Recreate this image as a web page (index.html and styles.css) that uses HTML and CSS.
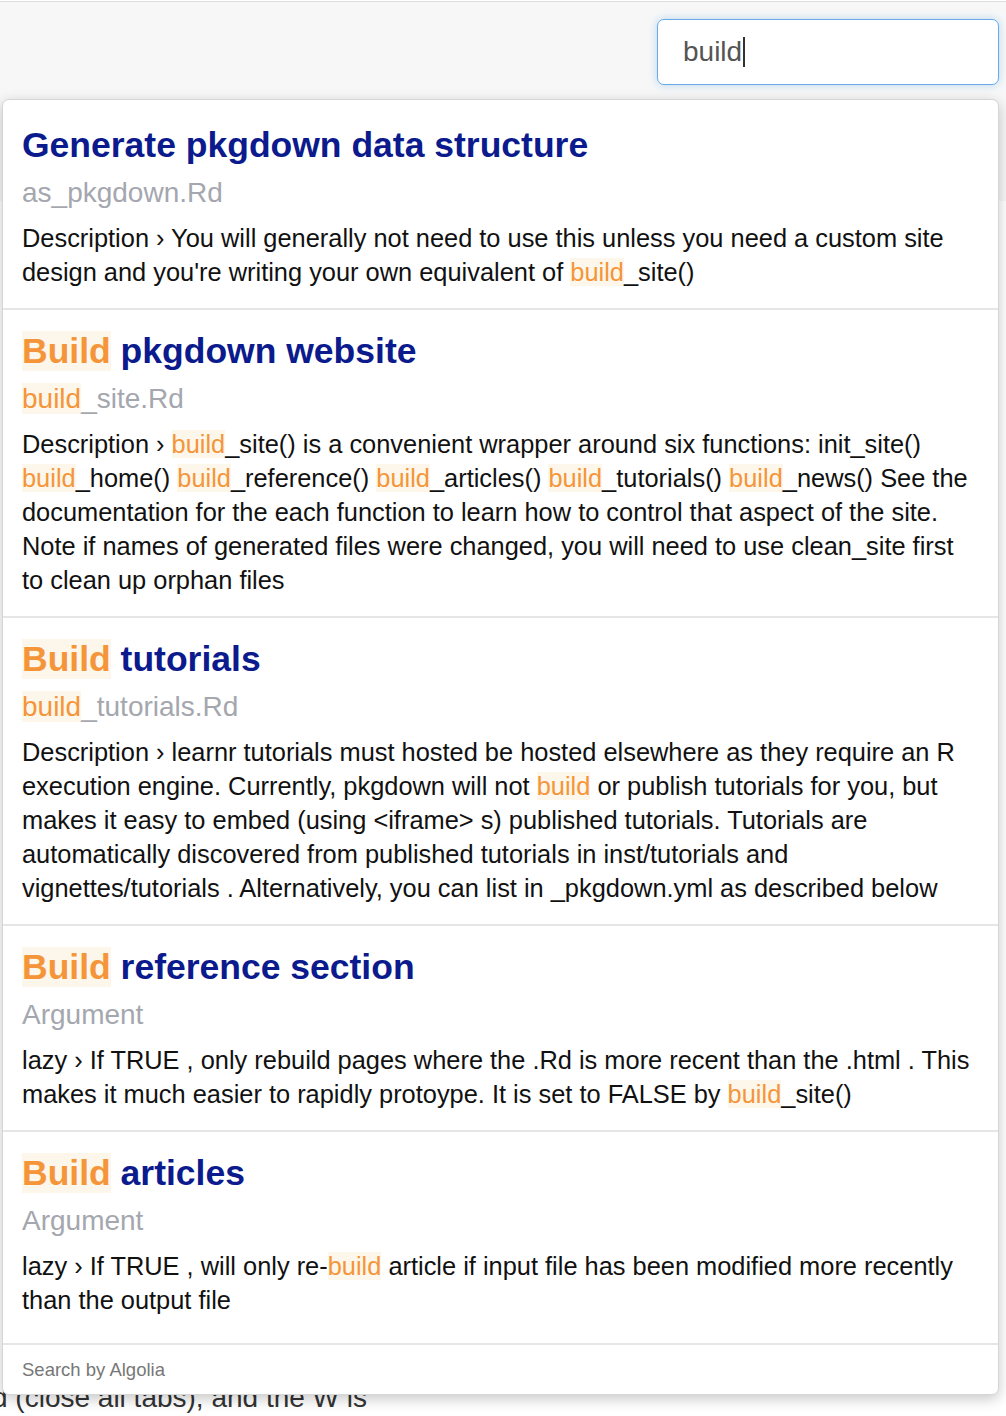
FILE: index.html
```html
<!DOCTYPE html>
<html>
<head>
<meta charset="utf-8">
<link rel="stylesheet" href="styles.css">
</head>
<body>
<header class="navbar">
  <div class="search">
    <span class="query">build</span><span class="caret"></span>
  </div>
</header>
<main class="page">
  <p class="behind">d (close all tabs), and the W is</p>
</main>

<div class="dropdown">
  <div class="item">
    <div class="title">Generate pkgdown data structure</div>
    <div class="sub">as_pkgdown.Rd</div>
    <div class="desc">Description › You will generally not need to use this unless you need a custom site design and you're writing your own equivalent of <em class="hl">build</em>_site()</div>
  </div>
  <div class="item">
    <div class="title"><em class="hl">Build</em> pkgdown website</div>
    <div class="sub"><em class="hl">build</em>_site.Rd</div>
    <div class="desc">Description › <em class="hl">build</em>_site() is a convenient wrapper around six functions: init_site() <em class="hl">build</em>_home() <em class="hl">build</em>_reference() <em class="hl">build</em>_articles() <em class="hl">build</em>_tutorials() <em class="hl">build</em>_news() See the documentation for the each function to learn how to control that aspect of the site. Note if names of generated files were changed, you will need to use clean_site first to clean up orphan files</div>
  </div>
  <div class="item">
    <div class="title"><em class="hl">Build</em> tutorials</div>
    <div class="sub"><em class="hl">build</em>_tutorials.Rd</div>
    <div class="desc">Description › learnr tutorials must hosted be hosted elsewhere as they require an R execution engine. Currently, pkgdown will not <em class="hl">build</em> or publish tutorials for you, but makes it easy to embed (using &lt;iframe&gt; s) published tutorials. Tutorials are automatically discovered from published tutorials in inst/tutorials and vignettes/tutorials . Alternatively, you can list in _pkgdown.yml as described below</div>
  </div>
  <div class="item">
    <div class="title"><em class="hl">Build</em> reference section</div>
    <div class="sub">Argument</div>
    <div class="desc">lazy › If TRUE , only rebuild pages where the .Rd is more recent than the .html . This makes it much easier to rapidly protoype. It is set to FALSE by <em class="hl">build</em>_site()</div>
  </div>
  <div class="item last">
    <div class="title"><em class="hl">Build</em> articles</div>
    <div class="sub">Argument</div>
    <div class="desc">lazy › If TRUE , will only re-<em class="hl">build</em> article if input file has been modified more recently than the output file</div>
  </div>
  <div class="footer">Search by Algolia</div>
</div>
</body>
</html>
```
FILE: styles.css
```css
html, body {
  margin: 0;
  padding: 0;
}
body {
  background: #ffffff;
  font-family: "Liberation Sans", Arial, sans-serif;
  color: #111;
  height: 1416px;
  overflow: hidden;
  position: relative;
}
.navbar {
  margin-top: 1px;
  border-top: 1px solid #dcdcdc;
  background: #f7f7f7;
  height: 200px;
  display: flex;
  justify-content: flex-end;
  padding: 17px 7px 0 0;
  box-sizing: border-box;
}
.search {
  width: 342px;
  height: 66px;
  box-sizing: border-box;
  border: 1.5px solid #6aa9e6;
  border-radius: 7px;
  background: #fff;
  box-shadow: 0 0 8px rgba(102, 175, 233, 0.45);
  display: flex;
  align-items: center;
  padding-left: 25px;
  font-size: 28px;
  color: #555;
}
.caret {
  display: inline-block;
  width: 2px;
  height: 30px;
  background: #333;
  margin-left: 1px;
}
.page {
  height: 1214px;
  display: flex;
  flex-direction: column;
  justify-content: flex-end;
}
.behind {
  margin: 0 0 2px -8px;
  font-size: 28px;
  line-height: 30px;
  color: #333;
  white-space: nowrap;
}
.dropdown {
  position: absolute;
  top: 99px;
  left: 2px;
  width: 997px;
  height: 1296px;
  box-sizing: border-box;
  background: #fff;
  border: 1px solid #d6d6d6;
  border-radius: 7px;
  box-shadow: 0 4px 14px rgba(0, 0, 0, 0.22);
  padding-top: 4px;
  display: flex;
  flex-direction: column;
}
.item {
  padding: 17px 20px 19px 19px;
  border-bottom: 2px solid #e6e6e6;
}
.item.last {
  padding-bottom: 26px;
}
.title {
  font-size: 35.5px;
  font-weight: bold;
  line-height: 48px;
  color: #0b1a8c;
}
.sub {
  font-size: 28px;
  line-height: 48px;
  color: #a4a7ae;
}
.desc {
  margin-top: 4px;
  font-size: 25.4px;
  line-height: 34px;
  color: #111;
}
.hl {
  font-style: normal;
  color: #f5953a;
  background: #fcf7ea;
}
.footer {
  flex: 1;
  padding-left: 19px;
  display: flex;
  align-items: center;
  font-size: 18.5px;
  color: #777;
}
```
